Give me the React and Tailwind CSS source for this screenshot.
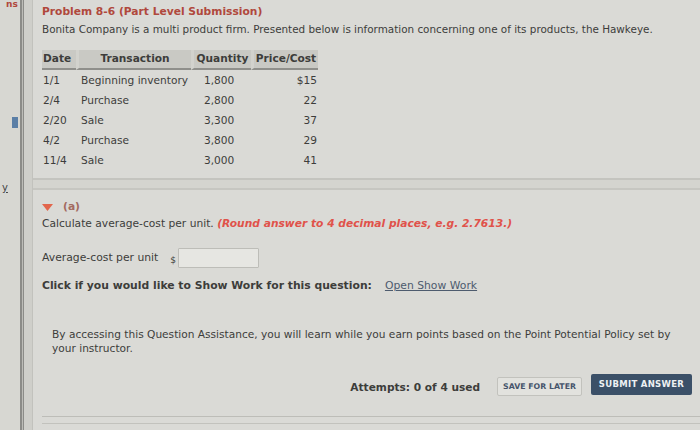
import React from "react";

const rows = [
  { date: "1/1", tx: "Beginning inventory", qty: "1,800", cost: "$15" },
  { date: "2/4", tx: "Purchase", qty: "2,800", cost: "22" },
  { date: "2/20", tx: "Sale", qty: "3,300", cost: "37" },
  { date: "4/2", tx: "Purchase", qty: "3,800", cost: "29" },
  { date: "11/4", tx: "Sale", qty: "3,000", cost: "41" },
];

export default function App() {
  return (
    <div
      className="w-[700px] h-[430px] overflow-hidden bg-[#d4d4cf] flex text-[#3d3d3b]"
      style={{ fontFamily: '"DejaVu Sans", Verdana, sans-serif' }}
    >
      {/* left nav strip */}
      <div className="w-[20px] shrink-0 flex flex-col text-[9px] bg-[#d7d7d2]">
        <div className="h-[9px] pl-[6px] text-[#b0483c] font-bold leading-[9px]">ns</div>
        <div className="mt-[108px] ml-[12px] w-[6px] h-[11px] bg-[#5b7fa6]"></div>
        <div className="mt-[52px] ml-[2px] text-[10px] underline text-[#444]">y</div>
      </div>
      <div className="w-[4px] shrink-0 border-l-2 border-r border-[#8c8c88] bg-[#bdbdb8]"></div>
      <div className="w-[9px] shrink-0 bg-[#cfcfca] border-r border-[#c2c2bd]"></div>

      {/* main */}
      <div className="flex-1 flex flex-col">
        <div className="h-[180px] shrink-0 bg-[#dadad6] border-b-2 border-[#c4c4bf] pl-[9px] pt-[5px]">
          <div className="text-[10.7px] font-bold text-[#b0483c] leading-[14px]">
            Problem 8-6 (Part Level Submission)
          </div>
          <div className="text-[10.4px] leading-[14px] mt-[3px] whitespace-nowrap">
            Bonita Company is a multi product firm. Presented below is information concerning one of its products, the Hawkeye.
          </div>
          <table className="mt-[14px] text-[10.6px] border-separate border-spacing-0">
            <thead>
              <tr className="bg-[#c9c9c4]">
                <th className="font-bold text-left pl-[1px] h-[20px] w-[34px] border-b-2 border-[#8f8f8b]">Date</th>
                <th className="font-bold text-center w-[115px] border-b-2 border-l-[3px] border-l-[#d2d2cd] border-[#8f8f8b]">Transaction</th>
                <th className="font-bold text-center w-[60px] border-b-2 border-l-[3px] border-l-[#d2d2cd] border-[#8f8f8b]">Quantity</th>
                <th className="font-bold text-center w-[67px] border-b-2 border-l-[3px] border-l-[#d2d2cd] border-[#8f8f8b]">Price/Cost</th>
              </tr>
            </thead>
            <tbody>
              {rows.map((r, i) => (
                <tr key={i} className={i === 0 ? "h-[22px]" : "h-[20px]"}>
                  <td className="pl-[1px] align-bottom pb-[3px]">{r.date}</td>
                  <td className="pl-[5px] align-bottom pb-[3px]">{r.tx}</td>
                  <td className="pl-[13px] align-bottom pb-[3px]">{r.qty}</td>
                  <td className="text-right pr-[1px] align-bottom pb-[3px]">{r.cost}</td>
                </tr>
              ))}
            </tbody>
          </table>
        </div>

        <div className="h-[8px] shrink-0 bg-[#d4d4cf]"></div>

        <div className="flex-1 bg-[#dadad6] border-t-2 border-[#c6c6c1] pl-[9px] pt-[10px] flex flex-col">
          <div className="flex items-center gap-[10px] h-[14px]">
            <svg width="11" height="7" viewBox="0 0 11 7">
              <path d="M0 0 L11 0 L5.5 7 Z" fill="#e2664c" />
            </svg>
            <span className="text-[10.7px] font-bold text-[#a36a60]">(a)</span>
          </div>
          <div className="text-[10.7px] leading-[14px] mt-[3px] whitespace-nowrap">
            Calculate average-cost per unit.{" "}
            <span className="font-bold italic text-[#e0524a]">(Round answer to 4 decimal places, e.g. 2.7613.)</span>
          </div>
          <div className="flex items-center mt-[16px] h-[22px] text-[10.8px]">
            <span>Average-cost per unit</span>
            <span className="ml-[12px] mt-[6px] text-[9px]">$</span>
            <div className="ml-[2px] w-[81px] h-[20px] bg-[#e6e6e2] border border-[#bdbdb8] rounded-[1px]"></div>
          </div>
          <div className="flex items-center mt-[10px] text-[10.8px] h-[14px] whitespace-nowrap">
            <span className="font-bold">Click if you would like to Show Work for this question:</span>
            <span className="ml-[13px] underline text-[#4d5b6e]">Open Show Work</span>
          </div>
          <div className="mt-[34px] pl-[10px] w-[645px] text-[10.6px] leading-[14px]">
            By accessing this Question Assistance, you will learn while you earn points based on the Point Potential Policy set by your instructor.
          </div>
          <div className="mt-[18px] flex items-center justify-end pr-[8px]">
            <span className="font-bold text-[10.6px] mr-[17px] mt-[6px]">Attempts: 0 of 4 used</span>
            <button className="h-[19px] px-[5px] mt-[4px] text-[7.8px] font-bold text-[#46546b] bg-[#e2e2de] border border-[#c2c2bd] rounded-[2px]">
              SAVE FOR LATER
            </button>
            <button className="ml-[9px] h-[21px] w-[101px] text-[8.5px] font-bold text-[#eef0f3] bg-[#3b5068] rounded-[2px] tracking-[0.3px]">
              SUBMIT ANSWER
            </button>
          </div>
          <div className="mt-[20px] border-t border-[#bdbdb8] h-[7px]"></div>
          <div className="border-t border-[#c2c2bd]"></div>
        </div>
      </div>
    </div>
  );
}
